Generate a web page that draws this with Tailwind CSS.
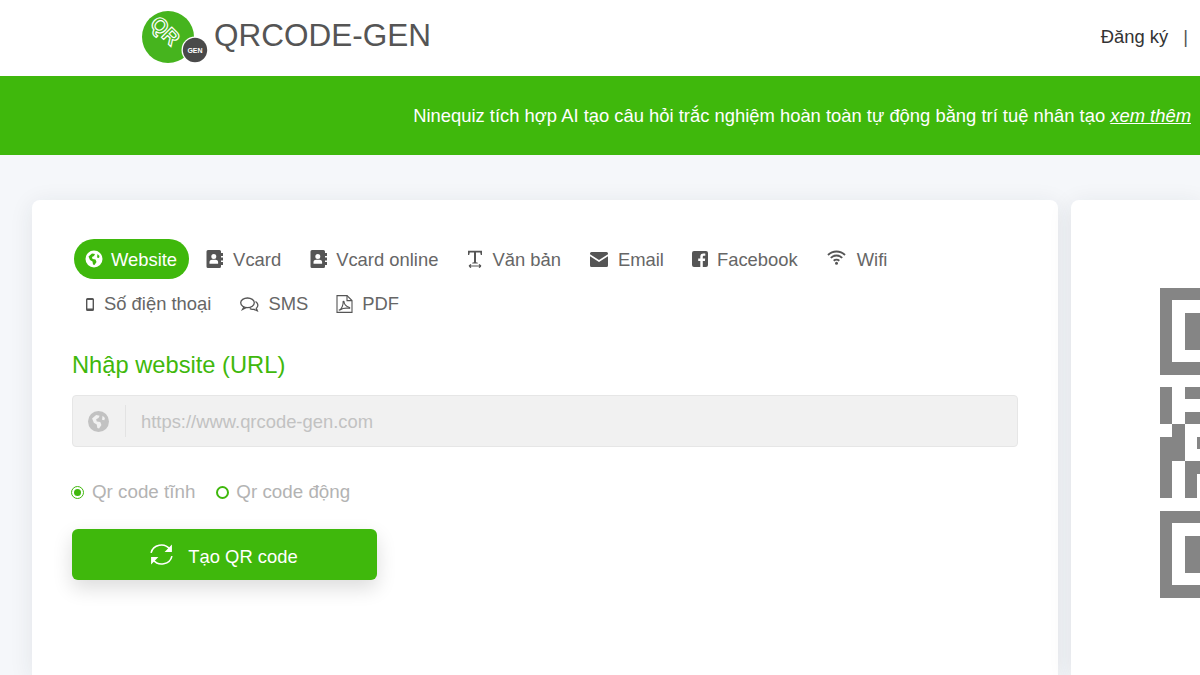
<!DOCTYPE html>
<html lang="vi">
<head>
<meta charset="utf-8">
<script src="https://cdn.jsdelivr.net/npm/@tailwindcss/browser@4"></script>
</head>
<body class="w-[1200px] h-[675px] overflow-hidden bg-[#f5f7fa] font-['Liberation_Sans',Arial,sans-serif] text-[18.4px] text-[#666]">
<header class="h-[76px] bg-white flex items-center justify-between pl-[142px]">
  <div class="flex items-center">
    <svg class="w-[67px] h-[54px] mt-[-2px]" viewBox="0 0 67 54">
      <circle cx="26" cy="27" r="26" fill="#46b41e"/>
      <g transform="rotate(45 23 21)">
        <text x="23" y="28" text-anchor="middle" font-size="21" font-family="Liberation Sans" font-weight="700" fill="none" stroke="#fff" stroke-width="1.200">QR</text>
      </g>
      <circle cx="53" cy="40" r="13.500" fill="#fff"/>
      <circle cx="53" cy="40" r="12.200" fill="#4a4a4a"/>
      <text x="53" y="42.500" text-anchor="middle" font-size="7" font-weight="700" font-family="Liberation Sans" fill="#fff">GEN</text>
    </svg>
    <span class="ml-[5px] mt-[-4px] text-[31.500px] leading-none text-[#555]">QRCODE-GEN</span>
  </div>
  <div class="flex items-center text-[#333] pr-[12px] mt-[-2px]">
    <span>Đăng ký</span><span class="ml-[15px] text-[#555]">|</span>
  </div>
</header>

<div class="h-[79px] bg-[#3fb80c] text-white flex items-center justify-end pr-[9px]">
  <span>Ninequiz tích hợp AI tạo câu hỏi trắc nghiệm hoàn toàn tự động bằng trí tuệ nhân tạo <a class="italic underline">xem thêm</a></span>
</div>

<main class="flex gap-[13px] pl-[32px] pt-[45px]">
  <section class="w-[1026px] h-[475px] shrink-0 bg-white rounded-t-[8px] shadow-[0_4px_24px_rgba(30,40,60,0.09)] pl-[40px] pr-[40px] pt-[39px]">
    <nav class="ml-[2px] flex flex-wrap gap-x-[5px] gap-y-[5px]">
      <a class="h-[40px] flex items-center pl-[11px] pr-[12px] rounded-full bg-[#3fb80c] text-white">
        <svg class="w-[18px] h-[18px] mr-[8px]" viewBox="0 0 18 18"><circle cx="9" cy="9" r="8.500" fill="#fff"/><path d="M3.500 6.500 7 3.500l3 .5-1 2-2 1 .5 2 3 .5 1 2.500-2 3-1.500-.5-.5-3-2.500-1.500zM12.500 4l2 2-.5 2-2-.5z" fill="#3fb80c"/></svg>
        <span class="pt-[1px]">Website</span>
      </a>
      <a class="h-[40px] flex items-center px-[12px]">
        <svg class="w-[17px] h-[18px] mr-[10px]" viewBox="0 0 17 18"><path fill-rule="evenodd" d="M2 0h11.500a1.500 1.500 0 0 1 1.500 1.500V3h2v3h-2v1.500h2v3h-2V12h2v3h-2v1.500a1.500 1.500 0 0 1-1.500 1.500H2a1.500 1.500 0 0 1-1.500-1.500v-15A1.500 1.500 0 0 1 2 0zm5.800 4a2.500 2.500 0 1 0 0 5 2.500 2.500 0 0 0 0-5zM3.500 13.800h8.600V12c0-1.500-1.400-2.300-2.500-2.300H6c-1.100 0-2.500.8-2.500 2.300z" fill="#555"/></svg>
        <span class="pt-[1px]">Vcard</span>
      </a>
      <a class="h-[40px] flex items-center px-[12px]">
        <svg class="w-[17px] h-[18px] mr-[9px]" viewBox="0 0 17 18"><path fill-rule="evenodd" d="M2 0h11.500a1.500 1.500 0 0 1 1.500 1.500V3h2v3h-2v1.500h2v3h-2V12h2v3h-2v1.500a1.500 1.500 0 0 1-1.500 1.500H2a1.500 1.500 0 0 1-1.500-1.500v-15A1.500 1.500 0 0 1 2 0zm5.800 4a2.500 2.500 0 1 0 0 5 2.500 2.500 0 0 0 0-5zM3.500 13.800h8.600V12c0-1.500-1.400-2.300-2.500-2.300H6c-1.100 0-2.500.8-2.500 2.300z" fill="#555"/></svg>
        <span class="pt-[1px]">Vcard online</span>
      </a>
      <a class="h-[40px] flex items-center px-[11px] pr-[12px]">
        <svg class="w-[18px] h-[18px] mr-[8px]" viewBox="0 0 18 18"><path d="M2 .8h14V5h-1.200l-.6-2.400H10v9.600l1.800.5v.8H6.200v-.8l1.800-.5V2.600H3.800L3.200 5H2z" fill="#555"/><path d="M3 16h12M3 16l2-1.600M3 16l2 1.600M15 16l-2-1.600M15 16l-2 1.600" stroke="#555" stroke-width="1.200" fill="none"/></svg>
        <span class="pt-[1px]">Văn bản</span>
      </a>
      <a class="h-[40px] flex items-center px-[12px]">
        <svg class="w-[18px] h-[15px] mr-[10px]" viewBox="0 0 18 15"><path d="M1.500 0h15A1.500 1.500 0 0 1 18 1.500v.7L9 8 0 2.200v-.7A1.500 1.500 0 0 1 1.500 0zM0 4.300l9 5.800 9-5.800v9.200a1.500 1.500 0 0 1-1.500 1.500h-15A1.500 1.500 0 0 1 0 13.500z" fill="#555"/></svg>
        <span class="pt-[1px]">Email</span>
      </a>
      <a class="h-[40px] flex items-center px-[11px] pr-[12px]">
        <svg class="w-[16px] h-[16px] mr-[9px]" viewBox="0 0 16 16"><path d="M2 0h12a2 2 0 0 1 2 2v12a2 2 0 0 1-2 2h-3.200V9.900h2.100l.3-2.400h-2.400V6c0-.7.2-1.200 1.200-1.200h1.300V2.700c-.2 0-1-.1-1.900-.1-1.900 0-3.100 1.100-3.100 3.200v1.700H6.200v2.400h2.100V16H2a2 2 0 0 1-2-2V2a2 2 0 0 1 2-2z" fill="#555"/></svg>
        <span class="pt-[1px]">Facebook</span>
      </a>
      <a class="h-[40px] flex items-center px-[12px]">
        <svg class="w-[19px] h-[15px] mr-[11px] mt-[-3px]" viewBox="0 0 19 15"><g fill="none" stroke="#555" stroke-width="1.900"><path d="M1 5a12 12 0 0 1 17 0"/><path d="M3.800 7.900a8 8 0 0 1 11.400 0"/><path d="M6.700 10.800a4 4 0 0 1 5.600 0"/></g><circle cx="9.500" cy="13.300" r="1.500" fill="#555"/></svg>
        <span class="pt-[1px]">Wifi</span>
      </a>
      <a class="h-[40px] flex items-center px-[12px]">
        <svg class="w-[8px] h-[13px] mr-[10px]" viewBox="0 0 8 13"><path fill-rule="evenodd" d="M1.500 0h5A1.500 1.500 0 0 1 8 1.500v10A1.500 1.500 0 0 1 6.500 13h-5A1.500 1.500 0 0 1 0 11.500v-10A1.500 1.500 0 0 1 1.500 0zm-.1 2v8.500h5.200V2z" fill="#555"/></svg>
        <span>Số điện thoại</span>
      </a>
      <a class="h-[40px] flex items-center px-[12px]">
        <svg class="w-[19px] h-[15px] mr-[9px]" viewBox="0 0 19 15"><g fill="none" stroke="#555" stroke-width="1.300"><ellipse cx="7.500" cy="5.800" rx="6.800" ry="4.800"/><path d="M4 9.800 2.500 12.500l4-2"/><path d="M15.500 4.500c2 1.200 3 3.500 1.800 5.500-.5.800-1 1.300-1 1.300l1 2.500-3.500-1.500c-1.500.3-3 0-4-.8"/></g></svg>
        <span class="mr-[-1px]">SMS</span>
      </a>
      <a class="h-[40px] flex items-center px-[12px]">
        <svg class="w-[17px] h-[18px] mr-[9px]" viewBox="0 0 17 18"><g fill="none" stroke="#555" stroke-width="1.100"><path d="M1 .6h10l5 5v11.800H1z"/><path d="M11 .6v5h5"/><path d="M3.500 15c2-1 4-5 3.600-8-.1-1 1-1 1 0 0 2 2 4.800 5 5.300 1 .2 1 1.200-.2 1-2.400-.3-6.500 0-8.500 1.400-1 .8-1.700 0-.9.300z"/></g></svg>
        <span>PDF</span>
      </a>
    </nav>

    <h2 class="mt-[21px] h-[41px] text-[23.700px] leading-[41px] text-[#3fb80c]">Nhập website (URL)</h2>

    <div class="mt-[9px] h-[52px] flex items-center rounded-[4px] border border-[#e6e6e6] bg-[#f1f1f1]">
      <div class="w-[53px] h-[32px] flex items-center justify-center border-r border-[#e3e3e3] shrink-0 pr-[1px]">
        <svg class="w-[21px] h-[21px]" viewBox="0 0 18 18"><circle cx="9" cy="9" r="9" fill="#c2c2c2"/><path d="M3.500 6.500 7 3.500l3 .5-1 2-2 1 .5 2 3 .5 1 2.500-2 3-1.500-.5-.5-3-2.500-1.500zM12.500 4l2 2-.5 2-2-.5z" fill="#f1f1f1"/></svg>
      </div>
      <span class="ml-[15px] pt-[1px] text-[#c2c2c2]">https://www.qrcode-gen.com</span>
    </div>

    <div class="mt-[34px] h-[22px] flex items-center text-[18.800px] text-[#b3b3b3]">
      <span class="ml-[-1px] w-[13px] h-[13px] rounded-full border-[1.500px] border-[#3fb80c] flex items-center justify-center"><span class="w-[7px] h-[7px] rounded-full bg-[#3fb80c]"></span></span>
      <span class="ml-[8px]">Qr code tĩnh</span>
      <span class="ml-[21px] w-[13px] h-[13px] rounded-full border-2 border-[#3fb80c]"></span>
      <span class="ml-[7px]">Qr code động</span>
    </div>

    <button class="mt-[26px] w-[305px] h-[51px] rounded-[6px] bg-[#3fb80c] text-white flex items-center justify-center shadow-[0_8px_20px_rgba(0,0,0,0.14)]">
      <svg class="w-[25px] h-[23px] mr-[14px] ml-[-2px]" viewBox="0 0 24 22"><g fill="none" stroke="#fff" stroke-width="1.500"><path d="M2 9.500A10 9.500 0 0 1 20 6"/><path d="M22 12.500A10 9.500 0 0 1 4 16"/></g><path d="M22 1.500v7h-7zM2 20.500v-7h7z" fill="#fff"/></svg>
      <span class="mt-[5px]">Tạo QR code</span>
    </button>
  </section>

  <section class="w-[129px] h-[475px] shrink-0 bg-white rounded-tl-[8px] shadow-[0_4px_24px_rgba(30,40,60,0.09)] pl-[89px] pt-[88px]">
    <svg class="w-[40px] h-[309.500px]" viewBox="0 0 3.231 25" preserveAspectRatio="none" shape-rendering="crispEdges" fill="#858585">
      <path fill-rule="evenodd" d="M0 0h7v7H0zM1 1v5h5V1zM2 2h3v3H2z"/>
      <path fill-rule="evenodd" d="M0 18h7v7H0zM1 19v5h5v-5zM2 20h3v3H2z"/>
      <path d="M0 8h1v3H0zM2 8h2v1H2zM2 10h3v1H2zM1 11h1v3H1zM0 12h1v5H0zM2 14h1v3H2zM3 14h1v1H3zM3 12h1v1H3z"/>
    </svg>
  </section>
</main>
</body>
</html>
